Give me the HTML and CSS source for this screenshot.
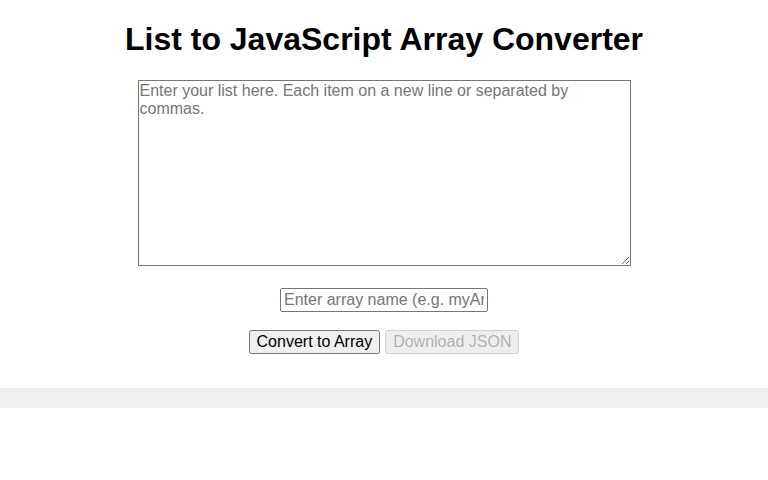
FILE: index.html
```html
<!DOCTYPE html>
<html>
<head>
  <title>List to JavaScript Array Converter</title>
  <meta name="viewport" content="width=device-width, initial-scale=1">
  <link rel="stylesheet" href="styles.css">
</head>
<body>
  <h1>List to JavaScript Array Converter</h1>
  <div class="content">
    <textarea id="listInput" class="list-input" placeholder="Enter your list here. Each item on a new line or separated by commas."></textarea>
    <input type="text" id="arrayName" class="name-input" placeholder="Enter array name (e.g. myArray)">
    <div class="buttons">
      <button id="convertBtn" class="button">Convert to Array</button>
      <button id="downloadBtn" class="button" disabled>Download JSON</button>
    </div>
  </div>
  <pre id="output" class="output"></pre>
</body>
</html>
```

FILE: styles.css
```css
html {
  font-family: "Liberation Sans", Arial, Helvetica, sans-serif;
  text-align: center;
}
body {
  margin: 0;
}
h1 {
  font-size: 32px;
  margin: 21.44px 0;
}
.content {
  display: flex;
  flex-direction: column;
  align-items: center;
}
.list-input {
  box-sizing: border-box;
  width: 493px;
  height: 186px;
  margin: 0;
  padding: 1px;
  font-family: "Liberation Sans", Arial, sans-serif;
  font-size: 16px;
  border: 1px solid #767676;
}
.name-input {
  width: 200px;
  margin-top: 22px;
  font-family: "Liberation Sans", Arial, sans-serif;
  font-size: 16px;
}
.buttons {
  display: flex;
  gap: 5px;
  margin-top: 18px;
}
.button {
  font-family: "Liberation Sans", Arial, sans-serif;
  font-size: 16px;
}
.output {
  background-color: #efefef;
  height: 20px;
  margin: 34px 0 0 0;
  padding: 0;
}
```
